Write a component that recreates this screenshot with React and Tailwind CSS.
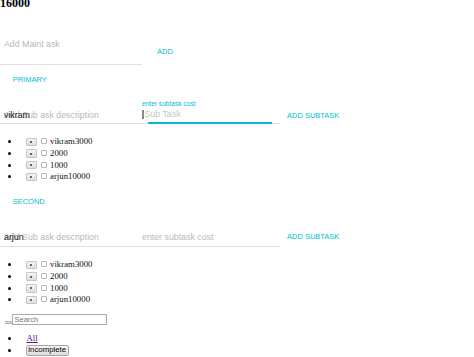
import React from "react";

const lists = ["vikram3000", "2000", "1000", "arjun10000"];

function Dot() {
    return <span className="ml-[7.5px] mr-[15px] w-[3px] h-[3px] rounded-full bg-black shrink-0" />;
}

function SubList({ className }) {
    return (
        <ul className={`text-[8.8px] ${className}`}>
            {lists.map((item) => (
                <li key={item} className="flex items-center h-[11.7px]">
                    <Dot />
                    {/* remove button */}
                    <span className="w-[11px] h-[8.5px] border border-[#c6c6c6] rounded-[1px] bg-gradient-to-b from-[#f4f4f4] to-[#dedede] flex items-center justify-center">
                        <span className="w-[2px] h-[2px] bg-[#666]" />
                    </span>
                    <span className="ml-[4.5px] w-[6px] h-[6px] border border-[#b5b5b5] rounded-[1px] bg-white -mt-[1px]" />
                    <span className="ml-[3px] text-[#111]">{item}</span>
                </li>
            ))}
        </ul>
    );
}

function SubRow({ who, focused, className }) {
    return (
        <div className={`flex items-start font-['Liberation_Sans'] ${className}`}>
            <div className="w-[142px] h-[25px] border-b border-[#e0e0e0] box-border">
                <div className="relative pl-[4px] pt-[10.5px] h-[20.5px] text-[8.8px] leading-[10px]">
                    <span className="text-[#b8b8b8]">Add Sub ask description</span>
                    <span className="absolute left-[4px] top-[10.5px] text-[#222]">{who}</span>
                </div>
            </div>
            <div className="relative w-[138px] h-[25px] border-b border-[#e0e0e0] box-border">
                {focused ? (
                    <>
                        <div className="pt-[0.5px] h-[7px] text-[6.6px] leading-[7px] text-[#00bcd4]">enter subtask cost</div>
                        <div className="flex items-center mt-[3px] h-[10px] text-[8.8px] leading-[10px] text-[#c4c4c4]">
                            <span className="w-[1.5px] h-[9px] bg-[#888] mr-[1px]" />
                            Sub Task
                        </div>
                        <div className="absolute left-[6px] w-[124px] -bottom-[1px] h-[2px] bg-[#00bcd4]" />
                    </>
                ) : (
                    <div className="pt-[10.5px] h-[10px] text-[8.8px] leading-[10px] text-[#b8b8b8]">enter subtask cost</div>
                )}
            </div>
            <div className={`ml-[7px] ${focused ? "mt-[12.8px]" : "mt-[11.5px]"} text-[7.5px] leading-[8px] text-[#00bcd4] font-medium`}>
                ADD SUBTASK
            </div>
        </div>
    );
}

export default function App() {
    return (
        <div className="w-[474px] h-[357px] overflow-hidden bg-white font-['Liberation_Serif'] text-black">
            <div className="-mt-[3px] h-[11px] text-[12px] leading-[12px] font-bold">16000</div>

            {/* main task */}
            <div className="flex items-start font-['Liberation_Sans']">
                <div className="w-[142px] h-[57px] border-b border-[#e0e0e0] box-border">
                    <div className="pl-[4px] pt-[31px] text-[8.8px] leading-[10px] text-[#b8b8b8]">Add Maint ask</div>
                </div>
                <div className="ml-[15px] mt-[40px] text-[7.6px] leading-[8px] text-[#00bcd4] font-medium">ADD</div>
            </div>

            <div className="pl-[12.7px] mt-[10.7px] h-[8px] font-['Liberation_Sans'] text-[7.5px] leading-[8px] text-[#00bcd4] font-medium">
                PRIMARY
            </div>

            <SubRow who="vikram" focused className="mt-[15.5px]" />
            <SubList className="mt-[11.8px]" />

            <div className="pl-[12.7px] mt-[14.8px] h-[8px] font-['Liberation_Sans'] text-[7.5px] leading-[8px] text-[#00bcd4] font-medium">
                SECOND
            </div>

            <SubRow who="arjun" className="mt-[16px]" />
            <SubList className="mt-[12.5px]" />

            {/* search */}
            <div className="flex items-end mt-[8.3px] pl-[5px] h-[11px]">
                <span className="w-[7px] h-[3.5px] mb-[1px] border border-[#b0b0b0] bg-[#e4e4e4] rounded-[1px]" />
                <div className="w-[95px] h-[11px] border border-[#a9a9a9] box-border flex items-center pl-[1.5px] font-['Liberation_Sans'] text-[7.5px] text-[#777]">
                    Search
                </div>
            </div>

            <ul className="mt-[8.5px] text-[8.8px]">
                <li className="flex items-center h-[10.5px]">
                    <Dot />
                    <a href="#" className="ml-[1px] text-[#551a8b] underline">All</a>
                </li>
                <li className="flex items-center h-[12px]">
                    <Dot />
                    <span className="inline-flex items-center justify-center w-[43px] h-[11px] border border-[#a6a6a6] rounded-[2px] bg-gradient-to-b from-[#f6f6f6] to-[#dddddd] font-['Liberation_Sans'] text-[7.8px] text-black">
                        Incomplete
                    </span>
                </li>
            </ul>
        </div>
    );
}
